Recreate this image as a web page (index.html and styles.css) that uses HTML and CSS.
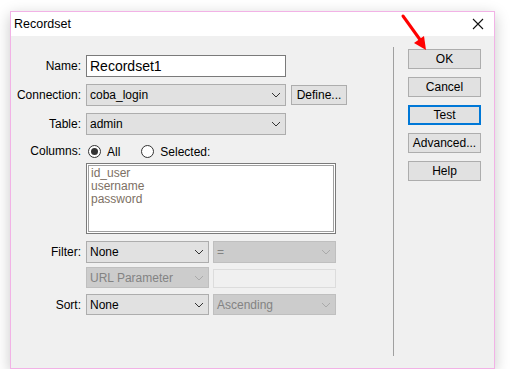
FILE: index.html
```html
<!DOCTYPE html>
<html lang="en">
<head>
  <meta charset="UTF-8" />
  <title>Recordset</title>
  <link rel="stylesheet" href="styles.css">
</head>
<body>
  <div class="window">
    <div class="titlebar">
      <span class="title">Recordset</span>
      <svg class="close" width="12" height="12" viewBox="0 0 12 12"><path d="M1 1L11 11M11 1L1 11" stroke="#111" stroke-width="1.1"/></svg>
    </div>
    <div class="dialog">
      <div class="form">
        <div class="row">
          <label>Name:</label>
          <div class="textbox">Recordset1</div>
        </div>
        <div class="row">
          <label>Connection:</label>
          <div class="select">coba_login<svg class="chev" width="10" height="6" viewBox="0 0 10 6"><path d="M1 1L5 5L9 1" fill="none" stroke="#333"/></svg></div>
          <button class="btn define">Define...</button>
        </div>
        <div class="row">
          <label>Table:</label>
          <div class="select">admin<svg class="chev" width="10" height="6" viewBox="0 0 10 6"><path d="M1 1L5 5L9 1" fill="none" stroke="#333"/></svg></div>
        </div>
        <div class="row columns">
          <label>Columns:</label>
          <span class="radio checked"></span><span class="radio-text">All</span>
          <span class="radio"></span><span class="radio-text">Selected:</span>
        </div>
        <div class="row list-row">
          <label></label>
          <div class="listbox">
            <div>id_user</div>
            <div>username</div>
            <div>password</div>
          </div>
        </div>
        <div class="row filter">
          <label>Filter:</label>
          <div class="select half">None<svg class="chev" width="10" height="6" viewBox="0 0 10 6"><path d="M1 1L5 5L9 1" fill="none" stroke="#333"/></svg></div>
          <div class="select half disabled">=<svg class="chev" width="10" height="6" viewBox="0 0 10 6"><path d="M1 1L5 5L9 1" fill="none" stroke="#aaa"/></svg></div>
        </div>
        <div class="row param">
          <label></label>
          <div class="select half disabled">URL Parameter<svg class="chev" width="10" height="6" viewBox="0 0 10 6"><path d="M1 1L5 5L9 1" fill="none" stroke="#aaa"/></svg></div>
          <div class="textbox half disabled"></div>
        </div>
        <div class="row sort">
          <label>Sort:</label>
          <div class="select half">None<svg class="chev" width="10" height="6" viewBox="0 0 10 6"><path d="M1 1L5 5L9 1" fill="none" stroke="#333"/></svg></div>
          <div class="select half disabled">Ascending<svg class="chev" width="10" height="6" viewBox="0 0 10 6"><path d="M1 1L5 5L9 1" fill="none" stroke="#aaa"/></svg></div>
        </div>
      </div>
      <div class="separator"></div>
      <div class="actions">
        <button class="btn">OK</button>
        <button class="btn">Cancel</button>
        <button class="btn focused">Test</button>
        <button class="btn">Advanced...</button>
        <button class="btn">Help</button>
      </div>
    </div>
  </div>
  <svg class="arrow" width="40" height="50" viewBox="0 0 40 50">
    <path d="M3 6L21 31" stroke="#f00" stroke-width="3" stroke-linecap="round"/>
    <path d="M14 33L26 40L24 26Z" fill="#f00"/>
  </svg>
</body>
</html>
```
FILE: styles.css
```css
* {
  box-sizing: border-box;
}
body {
  margin: 0;
  background: #ffffff;
  font-family: 'Liberation Sans', Arial, sans-serif;
  font-size: 12px;
  color: #000;
}
.window {
  margin: 11px 0 0 10px;
  width: 485px;
  height: 358px;
  border: 1px solid #f2b2e6;
  background: #f0f0f0;
  box-shadow: 0 4px 14px rgba(0, 0, 0, 0.22);
  display: flex;
  flex-direction: column;
}
.titlebar {
  height: 24px;
  background: #ffffff;
  display: flex;
  align-items: center;
  justify-content: space-between;
  padding: 0 10px 0 3px;
  flex-shrink: 0;
}
.title {
  font-size: 12.5px;
}
.dialog {
  flex: 1;
  display: flex;
}
.form {
  width: 382px;
  padding-top: 19px;
}
.row {
  display: flex;
  align-items: center;
  margin-bottom: 7px;
}
.row label {
  width: 75px;
  padding-right: 5px;
  text-align: right;
  flex-shrink: 0;
}
.textbox {
  width: 200px;
  height: 22px;
  background: #fff;
  border: 1px solid #7a7a7a;
  font-size: 14px;
  padding: 1px 3px;
  line-height: 18px;
}
.select {
  width: 200px;
  height: 22px;
  background: #e1e1e1;
  border: 1px solid #adadad;
  display: flex;
  align-items: center;
  justify-content: space-between;
  padding: 0 4px 0 3px;
}
.select.half,
.textbox.half {
  width: 123px;
  margin-right: 4px;
}
.select.disabled {
  background: #cccccc;
  border-color: #bfbfbf;
  color: #838383;
}
.textbox.disabled {
  background: #f0f0f0;
  border: 1px solid #dcdcdc;
  height: 19px;
  margin-top: 2px;
}
.btn {
  font-family: inherit;
  font-size: 12px;
  background: #e1e1e1;
  border: 1px solid #adadad;
  color: #000;
  height: 20px;
  padding: 0;
}
.define {
  width: 56px;
  margin-left: 5px;
}
.columns {
  height: 16px;
  margin-top: 8px;
  margin-bottom: 4px;
}
.radio {
  width: 13px;
  height: 13px;
  border: 1px solid #333;
  border-radius: 50%;
  background: #fff;
  margin-left: 2px;
  position: relative;
}
.radio.checked::after {
  content: "";
  position: absolute;
  left: 2px;
  top: 2px;
  width: 7px;
  height: 7px;
  border-radius: 50%;
  background: #333;
}
.radio-text {
  margin: 2px 19px 0 6px;
}
.listbox {
  width: 250px;
  height: 71px;
  background: #fff;
  border: 1px solid #7a7a7a;
  box-shadow: inset 0 0 0 1px #fff, inset 0 0 0 2px #a0a0a0;
  padding: 3px 4px;
  color: #7d7064;
  line-height: 13px;
}
.list-row {
  margin-bottom: 7px;
}
.filter {
  margin-bottom: 4px;
}
.param {
  margin-bottom: 6px;
}
.param .select {
  height: 21px;
}
.sort .select {
  height: 21px;
}
.separator {
  width: 1px;
  background: #a0a0a0;
  margin: 11px 0 12px;
}
.actions {
  padding: 13px 0 0 14px;
  display: flex;
  flex-direction: column;
  gap: 8px;
}
.actions .btn {
  width: 73px;
}
.btn.focused {
  border: 2px solid #0078d7;
}
.arrow {
  position: absolute;
  left: 400px;
  top: 10px;
}
```
